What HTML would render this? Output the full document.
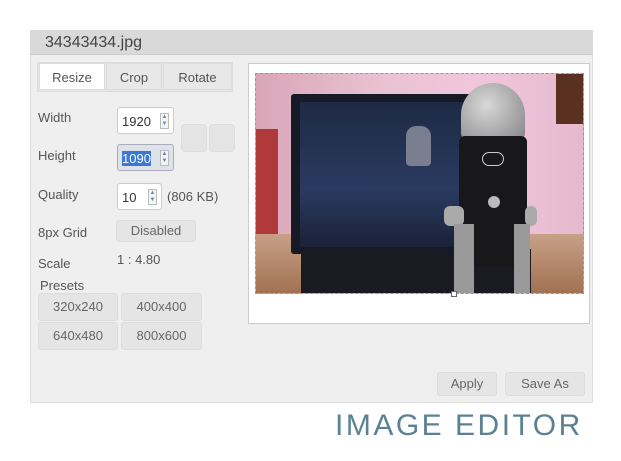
<!DOCTYPE html>
<html><head><style>
*{box-sizing:border-box;margin:0;padding:0}
body{width:621px;height:461px;background:#fff;position:relative;overflow:hidden;font-family:"Liberation Sans",sans-serif;color:#555}
.abs{position:absolute}
.panel{left:30px;top:30px;width:563px;height:373px;background:#efefef;border:1px solid #ddd}
.title{left:30px;top:30px;width:563px;height:25px;background:#d9d9d9;font-size:16px;color:#444;padding:4px 0 0 15px;border-bottom:1px solid #ccc}
.tab{top:63px;height:27px;font-size:13px;text-align:center;line-height:27px;border:1px solid #ddd;background:#e8e8e8;color:#555}
.lbl{font-size:13px;color:#555}
.inp{background:#fff;border:1px solid #ccc;border-radius:3px;font-size:13px;color:#333;padding:6px 0 0 4px;height:27px}
.spin{position:absolute;right:4px;top:5px;width:9px;height:16px;border:1px solid #bbb;background:#f4f4f4;font-size:6px;line-height:7px;text-align:center;color:#68a}
.btn{background:#e5e5e5;border:1px solid #ddd;border-radius:3px;font-size:13px;color:#666;text-align:center}
</style></head><body>
<div class="abs panel"></div>
<div class="abs title">34343434.jpg</div>
<div class="abs" style="left:37px;top:62px;width:196px;height:30px;background:#e6e6e6;border:1px solid #ddd"></div>
<div class="abs tab" style="left:39px;width:66px;background:#fff">Resize</div>
<div class="abs tab" style="left:106px;width:56px">Crop</div>
<div class="abs tab" style="left:163px;width:69px">Rotate</div>
<div class="abs lbl" style="left:38px;top:110px">Width</div>
<div class="abs inp" style="left:117px;top:107px;width:57px">1920<div class="spin">▲<br>▼</div></div>
<div class="abs" style="left:181px;top:124px;width:26px;height:28px;background:#e4e4e4;border:1px solid #ddd;border-radius:4px"></div>
<div class="abs" style="left:209px;top:124px;width:26px;height:28px;background:#e4e4e4;border:1px solid #ddd;border-radius:4px"></div>
<div class="abs lbl" style="left:38px;top:148px">Height</div>
<div class="abs inp" style="left:117px;top:144px;width:57px;background:#dde3e8;border-color:#aab"><span style="background:#3a78d8;color:#fff">1090</span><div class="spin">▲<br>▼</div></div>
<div class="abs lbl" style="left:38px;top:187px">Quality</div>
<div class="abs inp" style="left:117px;top:183px;width:45px">10<div class="spin">▲<br>▼</div></div>
<div class="abs lbl" style="left:167px;top:189px">(806 KB)</div>
<div class="abs lbl" style="left:38px;top:225px">8px Grid</div>
<div class="abs btn" style="left:116px;top:220px;width:80px;height:22px;line-height:20px">Disabled</div>
<div class="abs lbl" style="left:38px;top:256px">Scale</div>
<div class="abs lbl" style="left:117px;top:252px">1 : 4.80</div>
<div class="abs lbl" style="left:40px;top:278px">Presets</div>
<div class="abs btn" style="left:38px;top:293px;width:80px;height:28px;line-height:26px">320x240</div>
<div class="abs btn" style="left:121px;top:293px;width:81px;height:28px;line-height:26px">400x400</div>
<div class="abs btn" style="left:38px;top:322px;width:80px;height:28px;line-height:26px">640x480</div>
<div class="abs btn" style="left:121px;top:322px;width:81px;height:28px;line-height:26px">800x600</div>
<div class="abs" style="left:248px;top:63px;width:342px;height:261px;background:#fff;border:1px solid #ccc"></div>
<div class="abs" style="left:255px;top:73px;width:329px;height:221px;overflow:hidden;border:1px dashed #999;background:linear-gradient(90deg,#d9a6b8,#e9c3d3 40%,#f0c6dc 70%,#e6b9cd)">
<div class="abs" style="left:0;top:55px;width:22px;height:120px;background:#b03a3a"></div>
<div class="abs" style="left:0;top:160px;width:329px;height:61px;background:linear-gradient(#c8a088,#a07050)"></div>
<div class="abs" style="left:35px;top:20px;width:190px;height:160px;background:#151a26;border-radius:3px"></div>
<div class="abs" style="left:44px;top:28px;width:172px;height:145px;background:linear-gradient(#1e2a44,#2a3a60 60%,#1a2238)"></div>
<div class="abs" style="left:150px;top:52px;width:25px;height:40px;background:#7a7f90;border-radius:10px 10px 4px 4px"></div>
<div class="abs" style="left:45px;top:175px;width:230px;height:50px;background:#1a1a22"></div>
<div class="abs" style="left:300px;top:0;width:29px;height:50px;background:#5a3020"></div>
<div class="abs" style="left:205px;top:9px;width:64px;height:55px;background:radial-gradient(circle at 40% 40%,#d8d8d8,#888);border-radius:32px 32px 4px 4px"></div>
<div class="abs" style="left:203px;top:62px;width:68px;height:130px;background:#18181a;border-radius:6px"></div>
<div class="abs" style="left:226px;top:78px;width:22px;height:14px;border:1px solid #ccc;border-radius:8px"></div>
<div class="abs" style="left:232px;top:122px;width:12px;height:12px;background:#bbb;border-radius:6px"></div>
<div class="abs" style="left:188px;top:132px;width:20px;height:20px;background:#aaa;border-radius:6px"></div>
<div class="abs" style="left:269px;top:132px;width:12px;height:20px;background:#aaa;border-radius:6px"></div>
<div class="abs" style="left:198px;top:150px;width:20px;height:71px;background:#999"></div>
<div class="abs" style="left:258px;top:150px;width:16px;height:71px;background:#999"></div>
</div>
<div class="abs" style="left:451px;top:291px;width:6px;height:6px;border:1px solid #666;background:#fff"></div>
<div class="abs btn" style="left:437px;top:372px;width:60px;height:24px;line-height:22px">Apply</div>
<div class="abs btn" style="left:505px;top:372px;width:80px;height:24px;line-height:22px">Save As</div>
<div class="abs" style="left:335px;top:408px;font-size:30px;letter-spacing:2.5px;color:#5c8194;line-height:36px">IMAGE EDITOR</div>
</body></html>
